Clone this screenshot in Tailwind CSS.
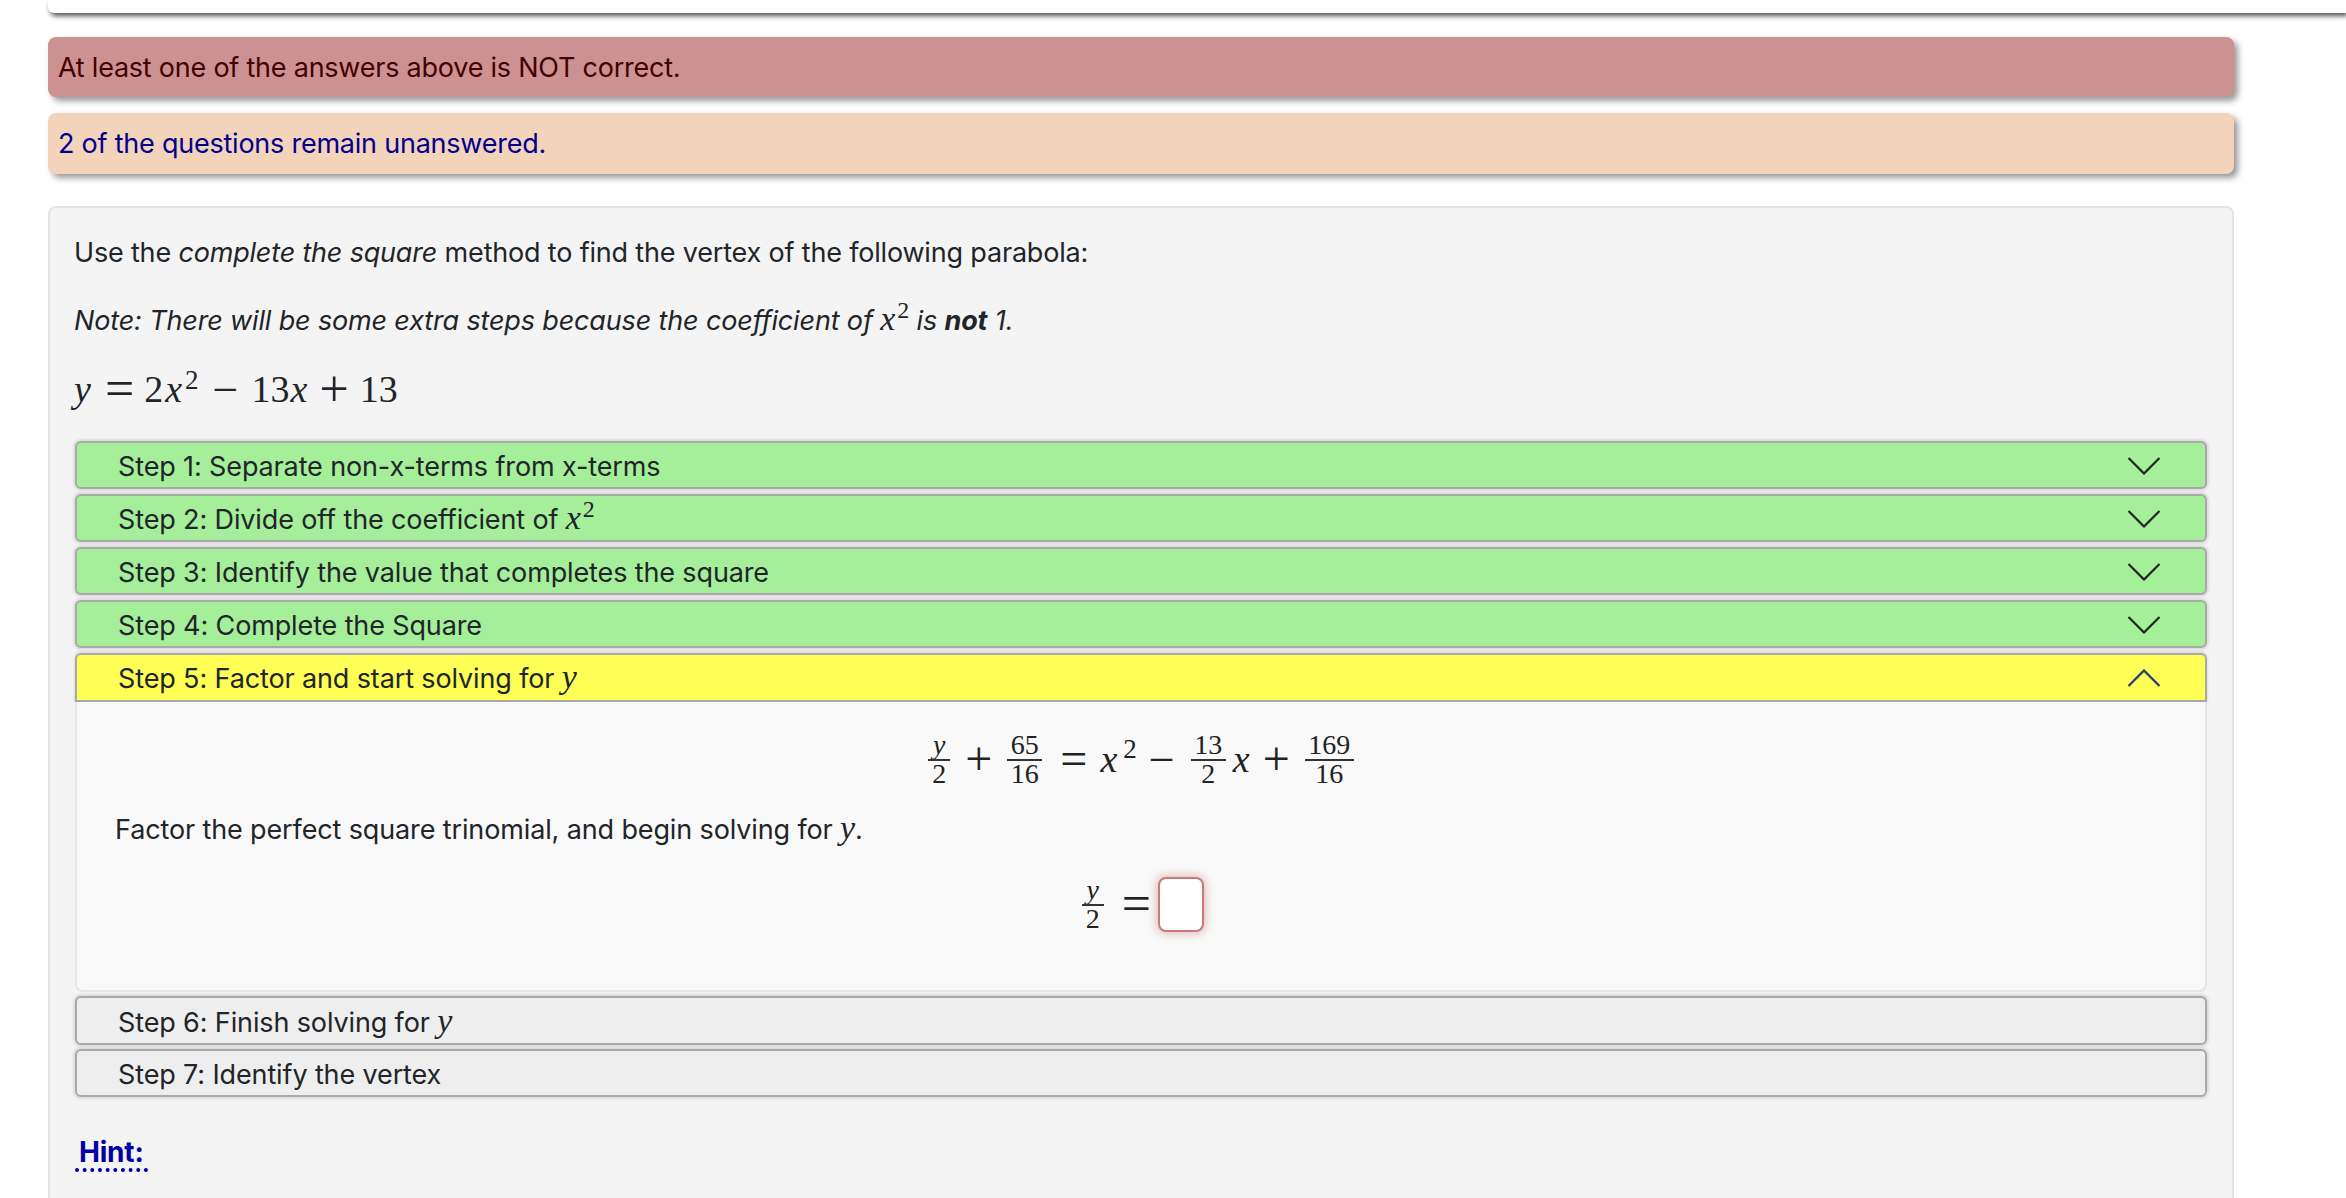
<!DOCTYPE html>
<html lang="en">
<head>
  <meta charset="UTF-8" />
  <title>Complete the square</title>
  <script src="https://cdn.jsdelivr.net/npm/@tailwindcss/browser@4"></script>
</head>
<body class="bg-white h-[1198px] overflow-hidden font-['Inter',sans-serif] text-[27px] text-[#212529] tracking-[-0.2px]">
  <div class="w-[2186px] h-[1198px] ml-[48px]">
    <!-- card above, mostly scrolled off -->
    <div class="w-[2298px] h-[13px] bg-white rounded-bl-[6px] shadow-[2px_3px_5px_#555]"></div>

    <div class="mt-[24px] h-[60px] px-[10px] pt-[3px] flex items-center rounded-[8px] bg-[#cb9291] text-[#450000] tracking-[-0.23px] shadow-[4px_4px_6px_#999]">At least one of the answers above is NOT correct.</div>
    <div class="mt-[16px] h-[61px] px-[10px] pt-[2px] flex items-center rounded-[8px] bg-[#f4d3bb] text-[#00008b] tracking-[-0.23px] shadow-[4px_4px_6px_#999]">2 of the questions remain unanswered.</div>

    <div class="mt-[32px] h-[992px] px-[25px] pt-[25px] bg-[#f4f4f4] border-2 border-b-0 border-[#e4e4e4] rounded-t-[8px]">
      <p class="-ml-[1px] h-[40px] leading-[40px] tracking-[-0.18px]">Use the <em>complete the square</em> method to find the vertex of the following parabola:</p>
      <p class="-ml-[1px] mt-[28px] h-[40px] leading-[40px] italic tracking-[-0.15px]">Note: There will be some extra steps because the coefficient of <span class="font-['Liberation_Serif',serif] text-[34px] leading-none">x<sup class="ml-[2px] text-[24px] not-italic">2</sup></span> is <strong class="font-bold">not</strong> 1.</p>

      <div class="-ml-[1px] mt-[24px] h-[40px] flex items-baseline font-['Liberation_Serif',serif] text-[38px] leading-[40px] tracking-normal">
        <i>y</i>
        <span class="ml-[14px] text-[52px] translate-y-[4px]">=</span>
        <span class="ml-[10px]">2</span><i class="ml-[2px]">x</i><sup class="ml-[3px] text-[27px]">2</sup>
        <span class="ml-[14px] text-[46px] translate-y-[3px]">−</span>
        <span class="ml-[13px]">13</span><i class="ml-[1px]">x</i>
        <span class="ml-[12px] text-[52px] translate-y-[4px]">+</span>
        <span class="ml-[11px]">13</span>
      </div>

      <div class="mt-[36px] tracking-[-0.13px]">
        <div class="h-[48px] mb-[5px] pl-[41px] pr-[45px] flex items-center justify-between bg-[#a5ee9a] border-2 border-[#a9a9a9] rounded-[6px] shadow-[0_0_2px_2px_#ddd]">
          <span class="mt-[5px]">Step 1: Separate non-x-terms from x-terms</span>
          <svg class="mt-[1px] w-[32px] h-[18px]" viewBox="0 0 32 18" fill="none" stroke="#222" stroke-width="2.2"><path d="M0.5 1 L16 16.5 L31.5 1"/></svg>
        </div>
        <div class="h-[48px] mb-[5px] pl-[41px] pr-[45px] flex items-center justify-between bg-[#a5ee9a] border-2 border-[#a9a9a9] rounded-[6px] shadow-[0_0_2px_2px_#ddd]">
          <span class="mt-[4px]">Step 2: Divide off the coefficient of <span class="font-['Liberation_Serif',serif] text-[34px] leading-none italic">x<sup class="ml-[2px] text-[24px] not-italic">2</sup></span></span>
          <svg class="mt-[1px] w-[32px] h-[18px]" viewBox="0 0 32 18" fill="none" stroke="#222" stroke-width="2.2"><path d="M0.5 1 L16 16.5 L31.5 1"/></svg>
        </div>
        <div class="h-[48px] mb-[5px] pl-[41px] pr-[45px] flex items-center justify-between bg-[#a5ee9a] border-2 border-[#a9a9a9] rounded-[6px] shadow-[0_0_2px_2px_#ddd]">
          <span class="mt-[4px]">Step 3: Identify the value that completes the square</span>
          <svg class="mt-[1px] w-[32px] h-[18px]" viewBox="0 0 32 18" fill="none" stroke="#222" stroke-width="2.2"><path d="M0.5 1 L16 16.5 L31.5 1"/></svg>
        </div>
        <div class="h-[48px] mb-[5px] pl-[41px] pr-[45px] flex items-center justify-between bg-[#a5ee9a] border-2 border-[#a9a9a9] rounded-[6px] shadow-[0_0_2px_2px_#ddd]">
          <span class="mt-[4px]">Step 4: Complete the Square</span>
          <svg class="mt-[1px] w-[32px] h-[18px]" viewBox="0 0 32 18" fill="none" stroke="#222" stroke-width="2.2"><path d="M0.5 1 L16 16.5 L31.5 1"/></svg>
        </div>
        <div class="h-[49px] pl-[41px] pr-[45px] flex items-center justify-between bg-[#ffff55] border-2 border-[#a9a9a9] rounded-t-[6px] shadow-[0_-1px_2px_1px_#ddd]">
          <span class="mt-[4px]">Step 5: Factor and start solving for <i class="font-['Liberation_Serif',serif] text-[34px] leading-none">y</i></span>
          <svg class="w-[32px] h-[18px]" viewBox="0 0 32 18" fill="none" stroke="#1a3a7a" stroke-width="2.2"><path d="M0.5 17 L16 1.5 L31.5 17"/></svg>
        </div>

        <div class="h-[290px] px-[38px] pt-[28px] bg-[#f9f9f9] border-2 border-t-0 border-[#e6e6e6] rounded-b-[8px]">
          <div class="h-[58px] flex items-center justify-center font-['Liberation_Serif',serif] text-[38px] tracking-normal text-[#222]">
            <span class="w-[22px] flex flex-col items-center text-[28px] leading-[28px]"><i>y</i><span class="w-full h-[2px] bg-[#333]"></span><span class="-mt-[1px]">2</span></span>
            <span class="ml-[15px] text-[48px]">+</span>
            <span class="ml-[15px] w-[35px] flex flex-col items-center text-[28px] leading-[28px]"><span>65</span><span class="w-full h-[2px] bg-[#333]"></span><span class="-mt-[1px]">16</span></span>
            <span class="ml-[18px] text-[48px]">=</span>
            <span class="ml-[13px] flex items-baseline"><i>x</i><sup class="ml-[6px] text-[27px]">2</sup></span>
            <span class="ml-[12px] text-[46px]">−</span>
            <span class="ml-[16px] w-[35px] flex flex-col items-center text-[28px] leading-[28px]"><span>13</span><span class="w-full h-[2px] bg-[#333]"></span><span class="-mt-[1px]">2</span></span>
            <i class="ml-[7px]">x</i>
            <span class="ml-[13px] text-[48px]">+</span>
            <span class="ml-[15px] w-[49px] flex flex-col items-center text-[28px] leading-[28px]"><span>169</span><span class="w-full h-[2px] bg-[#333]"></span><span class="-mt-[1px]">16</span></span>
          </div>

          <p class="mt-[22px] h-[40px] leading-[40px]">Factor the perfect square trinomial, and begin solving for <i class="font-['Liberation_Serif',serif] text-[34px] leading-none">y</i>.</p>

          <div class="mt-[25px] pl-[4px] h-[58px] flex items-center justify-center">
            <span class="w-[22px] flex flex-col items-center font-['Liberation_Serif',serif] text-[28px] leading-[28px] tracking-normal text-[#222]"><i>y</i><span class="w-full h-[2px] bg-[#333]"></span><span class="-mt-[1px]">2</span></span>
            <span class="ml-[18px] font-['Liberation_Serif',serif] text-[52px] tracking-normal text-[#222]">=</span>
            <input type="text" class="ml-[7px] w-[46px] h-[55px] bg-white border-2 border-[#c77b7b] rounded-[8px] shadow-[0_0_8px_2px_rgba(200,100,100,0.4)]" />
          </div>
        </div>

        <div class="mt-[4px] h-[49px] mb-[4px] pl-[41px] flex items-center bg-[#eeeeee] border-2 border-[#a9a9a9] rounded-[6px] shadow-[0_0_2px_2px_#ddd]">
          <span class="mt-[5px]">Step 6: Finish solving for <i class="font-['Liberation_Serif',serif] text-[34px] leading-none">y</i></span>
        </div>
        <div class="h-[48px] pl-[41px] flex items-center bg-[#eeeeee] border-2 border-[#a9a9a9] rounded-[6px] shadow-[0_0_2px_2px_#ddd]">
          <span class="mt-[5px]">Step 7: Identify the vertex</span>
        </div>
      </div>

      <div class="mt-[36px]">
        <span class="inline-block px-[4px] h-[37px] leading-[34px] text-[28px] font-bold text-[#0000a8] border-b-4 border-dotted border-[#0000a8]">Hint:</span>
      </div>
    </div>
  </div>
</body>
</html>
